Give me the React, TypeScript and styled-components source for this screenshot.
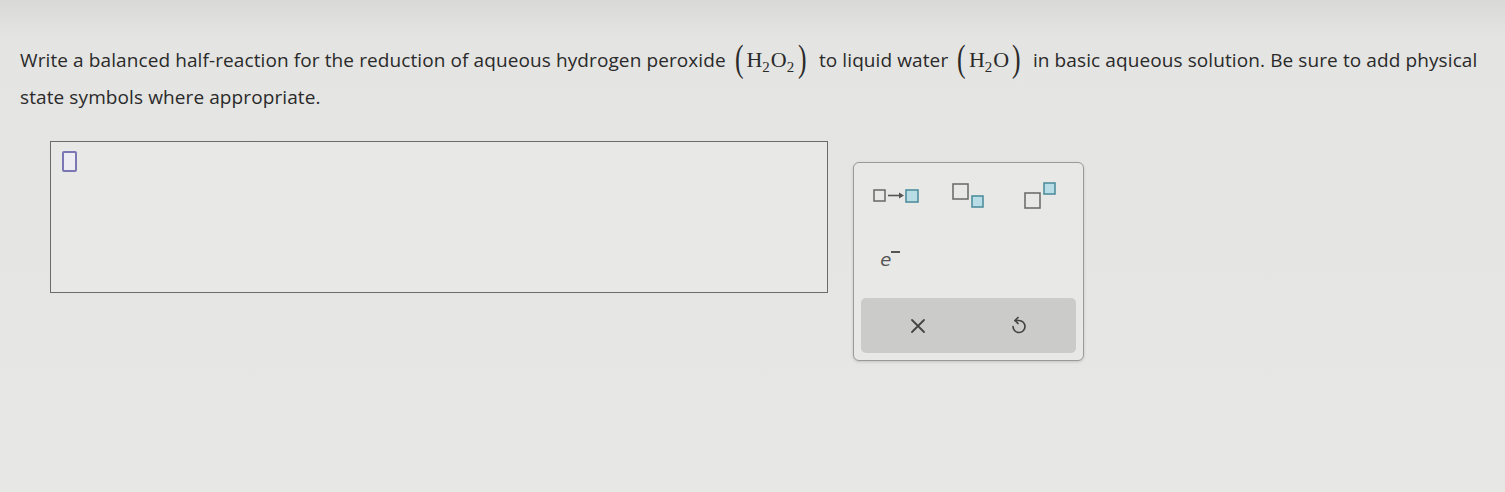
import React from "react";
import styled, { createGlobalStyle } from "styled-components";

const GlobalStyle = createGlobalStyle`
  html, body {
    margin: 0;
    padding: 0;
    background: #e6e6e4;
  }
  body {
    font-family: "Open Sans", "DejaVu Sans", sans-serif;
    color: #2a2a2a;
  }
`;

const Page = styled.div`
  width: 1505px;
  height: 492px;
  box-sizing: border-box;
  padding: 42px 0 0 20px;
  background: linear-gradient(to bottom, #d9dad8 0px, #e4e4e2 36px, #e7e7e5 100%);
  overflow: hidden;
`;

const Question = styled.p`
  margin: 0;
  width: 1482px;
  font-size: 19px;
  line-height: 37px;
  letter-spacing: 0.1px;
`;

const Math = styled.span`
  font-family: "Liberation Serif", "Times New Roman", serif;
  font-size: 22px;
  line-height: 0;
  white-space: nowrap;
  margin: 0 4px 0 6px;
  letter-spacing: 0;
`;

const Paren = styled.span`
  display: inline-block;
  font-size: 32px;
  font-weight: 300;
  line-height: 0;
  transform: scale(0.8, 1.2);
  vertical-align: -2px;
  margin: 0 2px;
`;

const Sub = styled.span`
  font-size: 15px;
  position: relative;
  top: 5px;
  margin-right: 1px;
`;

const Work = styled.div`
  display: flex;
  align-items: flex-start;
  gap: 25px;
  margin: 25px 0 0 30px;
`;

const AnswerBox = styled.div`
  width: 778px;
  height: 152px;
  box-sizing: border-box;
  border: 1.5px solid #6b6b6b;
  background: #e8e8e6;
  padding: 9px 11px;
`;

const Slot = styled.div`
  width: 11px;
  height: 17px;
  border: 2px solid #7a77b4;
  border-radius: 2px;
  background: #ececf2;
`;

const Palette = styled.div`
  margin-top: 21px;
  width: 231px;
  height: 199px;
  box-sizing: border-box;
  border: 1.5px solid #9a9a9a;
  border-radius: 6px;
  background: #e8e8e6;
  box-shadow: 0 1px 3px rgba(0, 0, 0, 0.15);
  padding: 6px 7px 7px;
  display: flex;
  flex-direction: column;
`;

const IconGrid = styled.div`
  display: grid;
  grid-template-columns: repeat(3, 1fr);
  grid-template-rows: 54px 72px;
  align-items: center;
  justify-items: center;
`;

const Tool = styled.button`
  background: none;
  border: none;
  padding: 0;
  display: flex;
  align-items: center;
  justify-content: center;
  cursor: pointer;
  color: #555;
`;

const Electron = styled.span`
  font-family: "DejaVu Sans", sans-serif;
  font-style: italic;
  font-size: 18px;
  color: #555;
  position: relative;
  margin-left: -22px;
  &::after {
    content: "";
    position: absolute;
    top: 2px;
    right: -9px;
    width: 9px;
    height: 2px;
    background: #555;
  }
`;

const ActionBar = styled.div`
  margin-top: auto;
  height: 55px;
  border-radius: 5px;
  background: #cbcbca;
  display: grid;
  grid-template-columns: 1fr 1fr;
  align-items: center;
  justify-items: center;
  padding: 0 6px;
`;

const Empty = "#6e6e6e";
const Fill = "#b9dde6";
const FillStroke = "#4f8f9e";

const ArrowIcon = () => (
  <svg width="48" height="16" viewBox="0 0 48 16">
    <rect x="1" y="2" width="11" height="11" fill="none" stroke={Empty} strokeWidth="1.6" />
    <line x1="15" y1="7.5" x2="29" y2="7.5" stroke="#555" strokeWidth="1.6" />
    <path d="M26 4.5 L31 7.5 L26 10.5 Z" fill="#555" />
    <rect x="33" y="2" width="12" height="12" fill={Fill} stroke={FillStroke} strokeWidth="1.6" />
  </svg>
);

const SubIcon = () => (
  <svg width="34" height="28" viewBox="0 0 34 28">
    <rect x="2" y="2" width="15" height="15" fill="none" stroke={Empty} strokeWidth="1.6" />
    <rect x="21" y="14" width="11" height="11" fill={Fill} stroke={FillStroke} strokeWidth="1.6" />
  </svg>
);

const SupIcon = () => (
  <svg width="34" height="30" viewBox="0 0 34 30">
    <rect x="2" y="12" width="15" height="15" fill="none" stroke={Empty} strokeWidth="1.6" />
    <rect x="21" y="2" width="11" height="11" fill={Fill} stroke={FillStroke} strokeWidth="1.6" />
  </svg>
);

const CloseIcon = () => (
  <svg width="16" height="16" viewBox="0 0 16 16">
    <path d="M2 2 L14 14 M14 2 L2 14" stroke="#444" strokeWidth="1.8" strokeLinecap="round" />
  </svg>
);

const UndoIcon = () => (
  <svg width="18" height="20" viewBox="0 0 18 20">
    <path
      d="M5 4.5 H9 A6 6 0 1 1 3 10.5"
      fill="none"
      stroke="#444"
      strokeWidth="1.7"
      strokeLinecap="round"
    />
    <path
      d="M8 1.5 L5 4.5 L8 7.5"
      fill="none"
      stroke="#444"
      strokeWidth="1.7"
      strokeLinecap="round"
      strokeLinejoin="round"
    />
  </svg>
);

export default function App() {
  return (
    <>
      <GlobalStyle />
      <Page>
        <Question>
          Write a balanced half-reaction for the reduction of aqueous hydrogen peroxide
          <Math>
            <Paren>(</Paren>H<Sub>2</Sub>O<Sub>2</Sub>
            <Paren>)</Paren>
          </Math>{" "}
          to liquid water
          <Math>
            <Paren>(</Paren>H<Sub>2</Sub>O<Paren>)</Paren>
          </Math>{" "}
          in basic aqueous solution. Be sure to add physical state symbols where appropriate.
        </Question>
        <Work>
          <AnswerBox>
            <Slot />
          </AnswerBox>
          <Palette>
            <IconGrid>
              <Tool aria-label="reaction arrow"><ArrowIcon /></Tool>
              <Tool aria-label="subscript"><SubIcon /></Tool>
              <Tool aria-label="superscript"><SupIcon /></Tool>
              <Tool aria-label="electron"><Electron>e</Electron></Tool>
            </IconGrid>
            <ActionBar>
              <Tool aria-label="clear"><CloseIcon /></Tool>
              <Tool aria-label="undo"><UndoIcon /></Tool>
            </ActionBar>
          </Palette>
        </Work>
      </Page>
    </>
  );
}
